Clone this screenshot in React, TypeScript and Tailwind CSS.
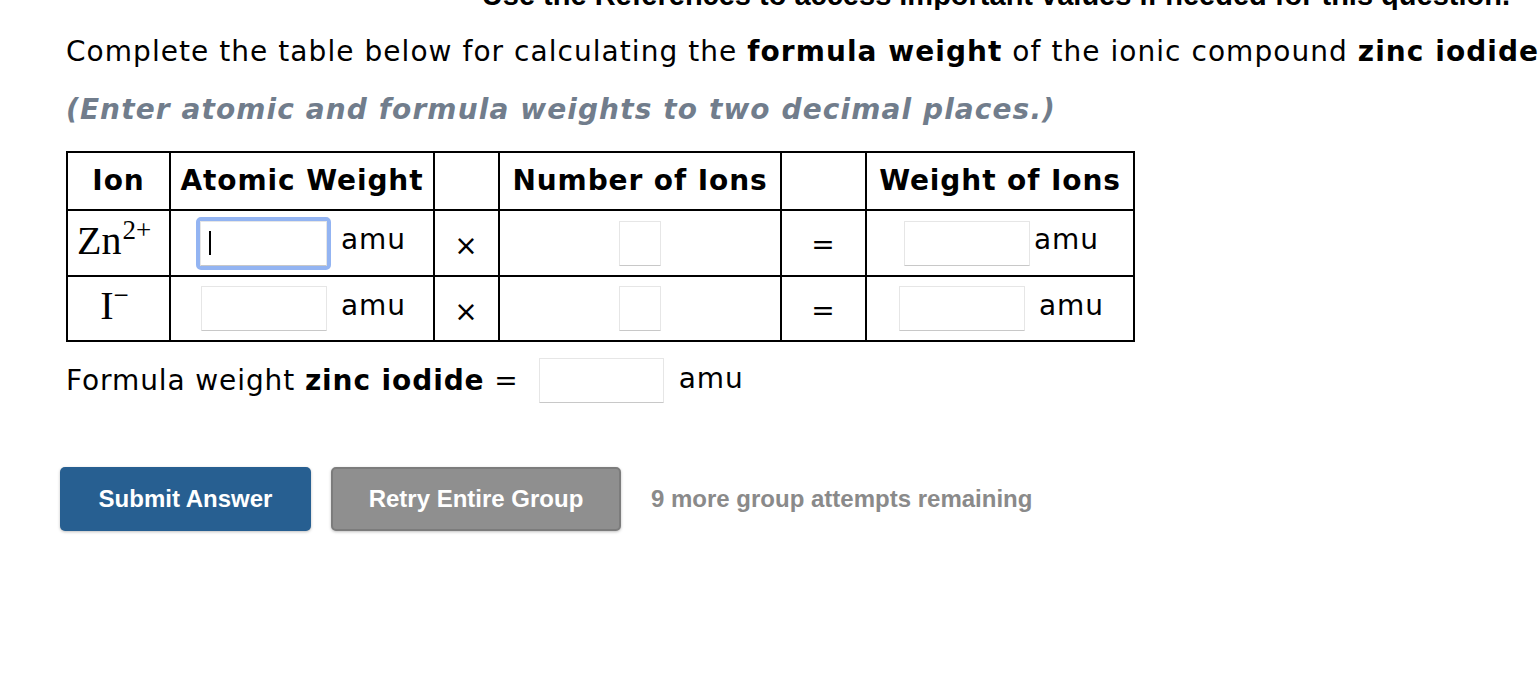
import React from "react";

const inputCls =
  "block bg-white border border-[#e6e6e6] border-b-[#c8c8c8] rounded-[1px] outline-none";

function Field({ w, h, focused }: { w: string; h: string; focused?: boolean }) {
  if (focused) {
    return (
      <div className="rounded-[5px] border-[4px] border-[#93b4f2] p-0">
        <div className={`${inputCls} ${w} ${h} flex items-center pl-[8px]`}>
          <span className="block w-[2px] h-[24px] bg-black" />
        </div>
      </div>
    );
  }
  return <div className={`${inputCls} ${w} ${h}`} />;
}

const serif = { fontFamily: '"Liberation Serif", "Times New Roman", serif' };

export default function App() {
  return (
    <div
      className="w-[1540px] h-[684px] bg-white overflow-hidden text-black tracking-[0.9px]"
      style={{ fontFamily: '"DejaVu Sans", Verdana, sans-serif' }}
    >
      <div className="h-[10px] overflow-hidden flex justify-end pr-[30px]">
        <div
          className="-mt-[22px] text-[29px] font-bold leading-[34px] whitespace-nowrap tracking-normal"
          style={{ fontFamily: '"Liberation Sans", Arial, sans-serif' }}
        >
          Use the References to access important values if needed for this question.
        </div>
      </div>

      <div className="pl-[66px]">
        <p className="mt-[26px] text-[28px] leading-[32px] whitespace-nowrap tracking-[1.05px]">
          Complete the table below for calculating the <b>formula weight</b> of the ionic compound{" "}
          <b>zinc iodide</b>
        </p>
        <p className="mt-[26px] text-[28px] leading-[32px] font-bold italic text-[#717d8c] whitespace-nowrap tracking-[1.1px]">
          (Enter atomic and formula weights to two decimal places.)
        </p>

        <table className="mt-[25px] border-collapse border-2 border-black text-[28px]">
          <thead>
            <tr className="h-[58px]">
              <th className="border-2 border-black w-[103px] font-bold text-center">Ion</th>
              <th className="border-2 border-black w-[264px] font-bold text-center">Atomic Weight</th>
              <th className="border-2 border-black w-[65px]"></th>
              <th className="border-2 border-black w-[282px] font-bold text-center">Number of Ions</th>
              <th className="border-2 border-black w-[85px]"></th>
              <th className="border-2 border-black w-[268px] font-bold text-center">Weight of Ions</th>
            </tr>
          </thead>
          <tbody>
            <tr className="h-[66px]">
              <td className="border-2 border-black text-left pl-[9px]">
                <span className="text-[40px] leading-none tracking-normal" style={serif}>
                  Zn
                  <sup className="text-[27px] relative -top-[15px] ml-[1px]">2+</sup>
                </span>
              </td>
              <td className="border-2 border-black">
                <div className="flex items-center pl-[25px] gap-[10px]">
                  <Field w="w-[127px]" h="h-[45px]" focused />
                  <span className="-mt-[6px]">amu</span>
                </div>
              </td>
              <td className="border-2 border-black text-center">
                <span className="relative top-[3px]">×</span>
              </td>
              <td className="border-2 border-black">
                <div className="pl-[119px]">
                  <Field w="w-[42px]" h="h-[45px]" />
                </div>
              </td>
              <td className="border-2 border-black text-center">
                <span className="relative top-[2px]">=</span>
              </td>
              <td className="border-2 border-black">
                <div className="flex items-center pl-[37px] gap-[4px]">
                  <Field w="w-[126px]" h="h-[45px]" />
                  <span className="-mt-[6px]">amu</span>
                </div>
              </td>
            </tr>
            <tr className="h-[65px]">
              <td className="border-2 border-black text-center">
                <span className="text-[40px] leading-none relative -left-[4px] tracking-normal" style={serif}>
                  I
                  <sup className="text-[27px] relative -top-[15px]">−</sup>
                </span>
              </td>
              <td className="border-2 border-black">
                <div className="flex items-center pl-[30px] gap-[14px]">
                  <Field w="w-[126px]" h="h-[45px]" />
                  <span className="-mt-[6px]">amu</span>
                </div>
              </td>
              <td className="border-2 border-black text-center">
                <span className="relative top-[3px]">×</span>
              </td>
              <td className="border-2 border-black">
                <div className="pl-[119px]">
                  <Field w="w-[42px]" h="h-[45px]" />
                </div>
              </td>
              <td className="border-2 border-black text-center">
                <span className="relative top-[2px]">=</span>
              </td>
              <td className="border-2 border-black">
                <div className="flex items-center pl-[32px] gap-[14px]">
                  <Field w="w-[126px]" h="h-[45px]" />
                  <span className="-mt-[6px]">amu</span>
                </div>
              </td>
            </tr>
          </tbody>
        </table>

        <div className="mt-[16px] flex items-center text-[28px] whitespace-nowrap">
          <span>
            Formula weight <b>zinc iodide</b> =
          </span>
          <div className="ml-[20px]">
            <Field w="w-[125px]" h="h-[45px]" />
          </div>
          <span className="ml-[15px] -mt-[4px]">amu</span>
        </div>
      </div>

      <div
        className="mt-[64px] pl-[60px] flex items-center tracking-normal"
        style={{ fontFamily: '"Liberation Sans", Arial, sans-serif' }}
      >
        <button className="w-[251px] h-[64px] rounded-[5px] bg-[#275f91] text-white text-[24px] font-bold shadow-[0_1px_3px_rgba(0,0,0,0.25)]">
          Submit Answer
        </button>
        <button className="ml-[20px] w-[290px] h-[64px] rounded-[5px] bg-[#8f8f8f] border-2 border-[#7c7c7c] text-white text-[24px] font-bold shadow-[0_1px_3px_rgba(0,0,0,0.25)]">
          Retry Entire Group
        </button>
        <span className="ml-[30px] text-[24px] font-bold text-[#8a8a8a]">
          9 more group attempts remaining
        </span>
      </div>
    </div>
  );
}
